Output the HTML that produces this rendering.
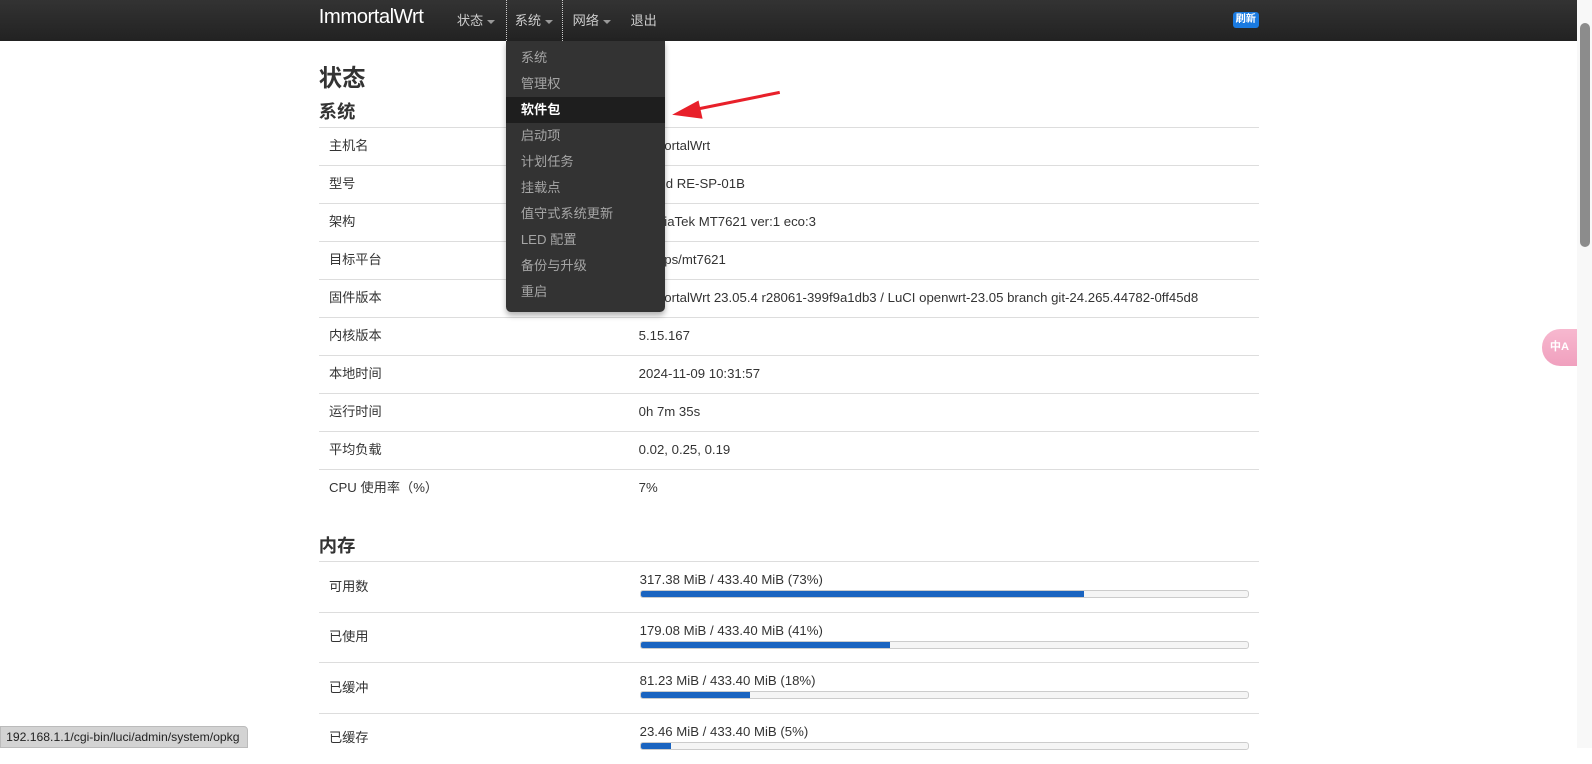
<!DOCTYPE html>
<html><head><meta charset="utf-8"><style>
*{margin:0;padding:0;box-sizing:border-box}
body{width:1592px;height:748px;overflow:hidden;background:#fff;font-family:"Liberation Sans","Noto Sans CJK SC",sans-serif;font-size:13px;color:#333;position:relative}
#w{position:absolute;left:0;top:0;width:1568px;height:737px;zoom:1.0153}
.nav{position:absolute;left:0;top:0;width:1553px;height:40px;background:linear-gradient(#333,#222);}
.brand{position:absolute;left:314px;top:6px;font-size:20px;color:#fff;letter-spacing:-0.5px}
.ni{position:absolute;top:10px;color:#ccc;font-size:13px}
.car{display:inline-block;border-left:4px solid transparent;border-right:4px solid transparent;border-top:4px solid #999;vertical-align:middle;margin-left:4px}
.sel{position:absolute;left:498px;top:0;width:57px;height:40px;border-left:1px dotted #ccc;border-right:1px dotted #ccc}
.badge{position:absolute;left:1214px;top:12px;width:26px;height:16px;background:#1a7ae0;border-radius:3px;color:#fff;font-size:10px;line-height:16px;text-align:center;font-weight:bold}
.dd{position:absolute;left:498px;top:40px;width:157px;height:267px;background:#333;border-radius:0 0 5px 5px;box-shadow:0 3px 6px rgba(0,0,0,.3);padding-top:4px}
.dd div{height:25.7px;line-height:25.7px;padding-left:15px;color:#a5a5a5;font-size:13px}
.dd .act{background:#1e1e1e;color:#fff;font-weight:bold}
h2{position:absolute;left:314px;top:58px;font-size:23px;font-weight:bold;color:#333}
h3{position:absolute;left:314px;font-size:18px;font-weight:bold;color:#333}
.tbl{position:absolute;left:314px;width:926px}
.r{border-top:1px solid #ddd;position:relative;line-height:36px}
.r .l{position:absolute;left:10px;top:0}
.r .v{position:absolute;left:315px;top:0}
.m .l{top:6px}
.bar{position:absolute;left:316px;width:600px;height:8px;border:1px solid #ccc;border-radius:3px;background:#f5f5f5;overflow:hidden}
.bar i{display:block;height:100%;background:#1a64c0}
.sb{position:absolute;left:1553px;top:0;width:15px;height:737px;background:#f8f8f8}
.th{position:absolute;left:3px;top:23px;width:10px;height:220px;background:#8c8c8c;border-radius:5px}
.status{position:absolute;left:0;top:715px;height:22px;width:244px;background:#d3d3d3;border:1px solid #bbb;border-radius:0 4px 0 0;padding:3px 5px;font-size:12px;color:#222}
.tr{position:absolute;left:1519px;top:324px;width:34px;height:36px;background:linear-gradient(#f7b8cf,#f0a0be);border-radius:18px 0 0 18px;color:#fff;font-size:11px;font-weight:bold;line-height:36px;text-align:center}
</style></head><body><div id="w">
<div class="nav">
<div class="brand">ImmortalWrt</div>
<div class="sel"></div>
<div class="ni" style="left:450px">状态<span class="car"></span></div>
<div class="ni" style="left:507px">系统<span class="car"></span></div>
<div class="ni" style="left:564px">网络<span class="car"></span></div>
<div class="ni" style="left:621px">退出</div>
<div class="badge">刷新</div>
</div>
<h2>状态</h2>
<h3 style="top:97px">系统</h3>
<div class="tbl" style="top:125px">
<div class="r" style="height:37.5px"><span class="l">主机名</span><span class="v">ImmortalWrt</span></div>
<div class="r" style="height:37.5px"><span class="l">型号</span><span class="v">Cloud RE-SP-01B</span></div>
<div class="r" style="height:37.5px"><span class="l">架构</span><span class="v">MediaTek MT7621 ver:1 eco:3</span></div>
<div class="r" style="height:37.5px"><span class="l">目标平台</span><span class="v">ramips/mt7621</span></div>
<div class="r" style="height:37.5px"><span class="l">固件版本</span><span class="v">ImmortalWrt 23.05.4 r28061-399f9a1db3 / LuCI openwrt-23.05 branch git-24.265.44782-0ff45d8</span></div>
<div class="r" style="height:37.5px"><span class="l">内核版本</span><span class="v">5.15.167</span></div>
<div class="r" style="height:37.5px"><span class="l">本地时间</span><span class="v">2024-11-09 10:31:57</span></div>
<div class="r" style="height:37.5px"><span class="l">运行时间</span><span class="v">0h 7m 35s</span></div>
<div class="r" style="height:37.5px"><span class="l">平均负载</span><span class="v">0.02, 0.25, 0.19</span></div>
<div class="r" style="height:37.5px"><span class="l">CPU 使用率（%）</span><span class="v">7%</span></div>
</div>
<h3 style="top:524px">内存</h3>
<div class="tbl m" style="top:553px">
<div class="r" style="height:50px"><span class="l">可用数</span><span class="v" style="top:2px;left:316px;line-height:32px">317.38 MiB / 433.40 MiB (73%)</span><div class="bar" style="top:27px"><i style="width:73%"></i></div></div>
<div class="r" style="height:49.5px"><span class="l">已使用</span><span class="v" style="top:2px;left:316px;line-height:32px">179.08 MiB / 433.40 MiB (41%)</span><div class="bar" style="top:27px"><i style="width:41%"></i></div></div>
<div class="r" style="height:50px"><span class="l">已缓冲</span><span class="v" style="top:2px;left:316px;line-height:32px">81.23 MiB / 433.40 MiB (18%)</span><div class="bar" style="top:27px"><i style="width:18%"></i></div></div>
<div class="r" style="height:50px"><span class="l">已缓存</span><span class="v" style="top:2px;left:316px;line-height:32px">23.46 MiB / 433.40 MiB (5%)</span><div class="bar" style="top:27px"><i style="width:5%"></i></div></div>
</div>
<div class="dd">
<div>系统</div><div>管理权</div><div class="act">软件包</div><div>启动项</div><div>计划任务</div><div>挂载点</div><div>值守式系统更新</div><div>LED 配置</div><div>备份与升级</div><div>重启</div>
</div>
<svg style="position:absolute;left:0;top:0" width="1568" height="737"><line x1="768" y1="91" x2="684" y2="108" stroke="#e8202a" stroke-width="3"/><polygon points="662,113 688,99 692,117" fill="#e8202a"/></svg>
<div class="tr">中A</div>
<div class="sb"><div class="th"></div></div>
<div class="status">192.168.1.1/cgi-bin/luci/admin/system/opkg</div>
</div></body></html>
